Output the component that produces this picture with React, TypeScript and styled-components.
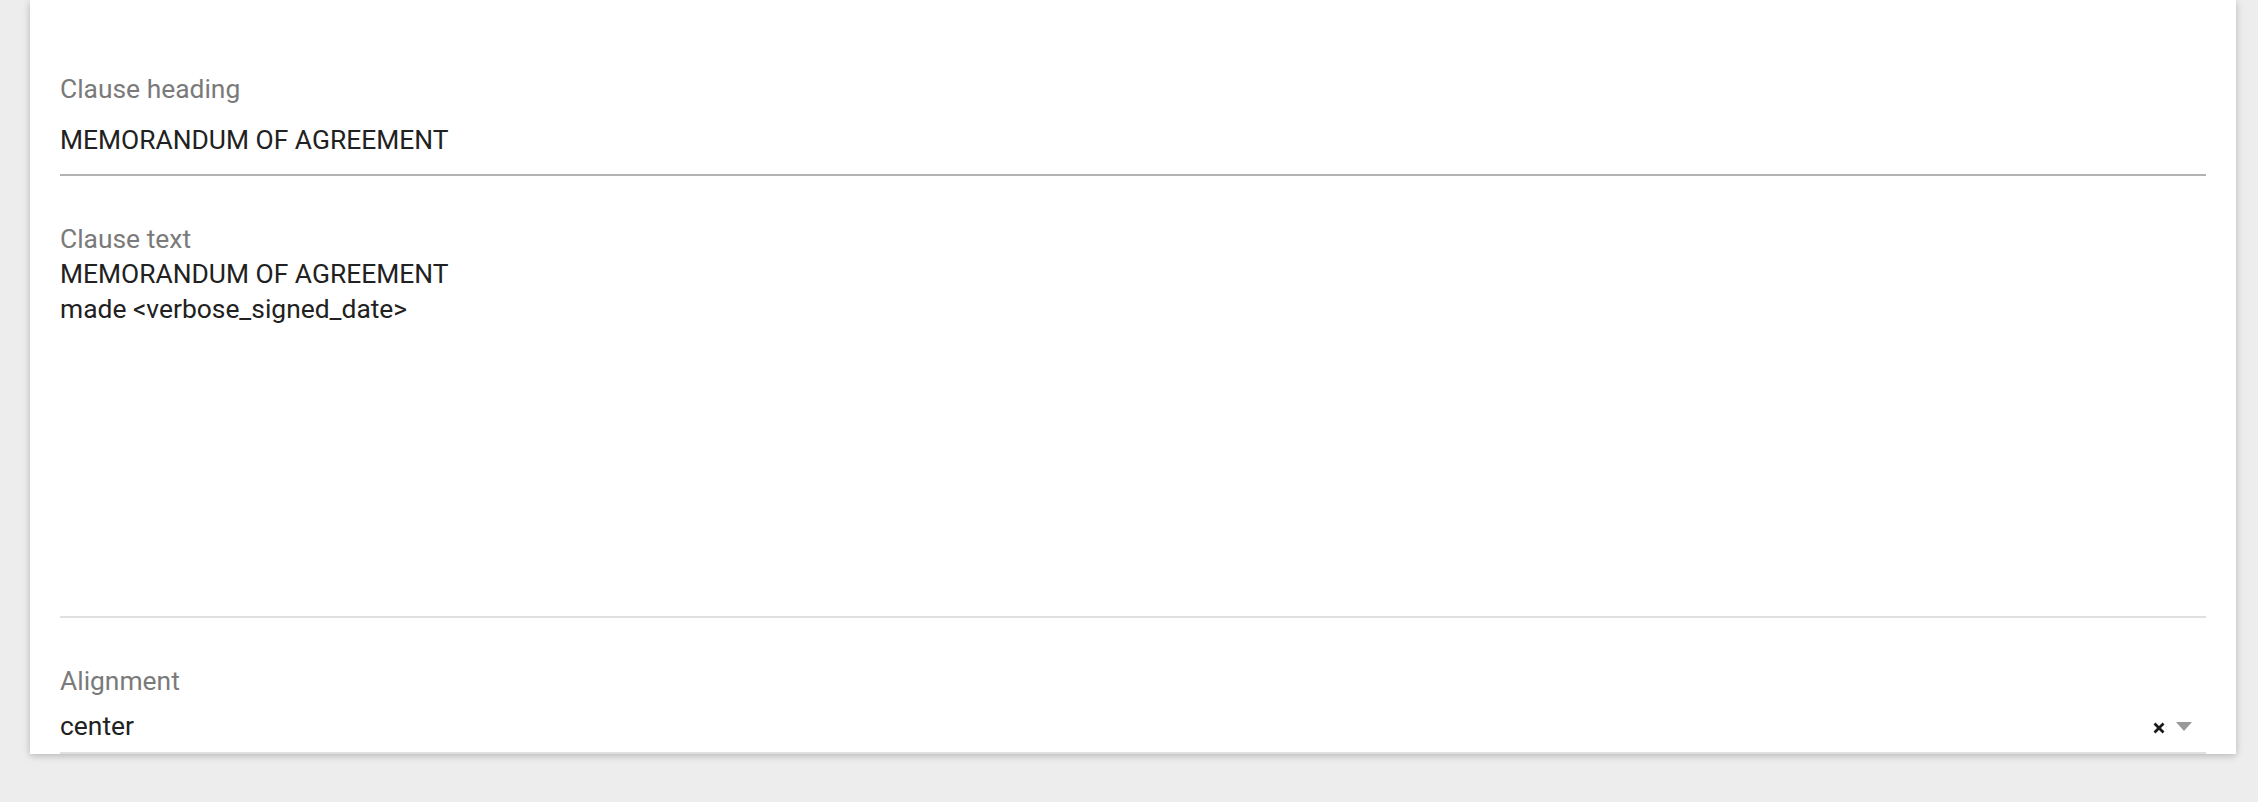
import styled, { createGlobalStyle } from "styled-components";

const GlobalStyle = createGlobalStyle`
  html, body {
    margin: 0;
    padding: 0;
    background: #ededed;
    font-family: Roboto, "Liberation Sans", Arial, sans-serif;
  }
`;

const Page = styled.div`
  min-height: 802px;
  background: #ededed;
  overflow: hidden;
`;

const Card = styled.div`
  margin: 0 22px 0 30px;
  padding: 74px 30px 0;
  background: #fff;
  box-shadow: 0 1.5px 9px rgba(0, 0, 0, 0.12), 0 1.5px 6px rgba(0, 0, 0, 0.12);
`;

const Field = styled.div<{ $gap?: number }>`
  display: flex;
  flex-direction: column;
  margin-top: ${(p) => p.$gap ?? 0}px;
`;

const Label = styled.label`
  font-size: 26.4px;
  line-height: 30px;
  color: #7a7a7a;
`;

const Value = styled.div`
  margin-top: 19px;
  padding-bottom: 16px;
  font-size: 26.4px;
  line-height: 35px;
  color: #212121;
  border-bottom: 2px solid #b3b3b3;
`;

const TextArea = styled.div`
  margin-top: 3px;
  height: 359px;
  font-size: 26.4px;
  line-height: 35px;
  color: #212121;
  border-bottom: 2px solid #e0e0e0;
`;

const SelectRow = styled.div`
  margin-top: 19px;
  height: 37px;
  display: flex;
  align-items: flex-start;
  border-bottom: 2px solid #e0e0e0;
`;

const SelectValue = styled.span`
  flex: 1;
  font-size: 26.4px;
  line-height: 22px;
  color: #212121;
`;

const Icons = styled.div`
  display: flex;
  align-items: flex-start;
  gap: 11px;
  margin: 7px 14px 0 0;
`;

const ClearIcon = () => (
  <svg width="12" height="12" viewBox="0 0 12 12">
    <path d="M1.5 1.5 L10.5 10.5 M10.5 1.5 L1.5 10.5" stroke="#1a1a1a" strokeWidth="2.8" />
  </svg>
);

const ArrowIcon = () => (
  <svg width="16" height="9" viewBox="0 0 16 9">
    <path d="M0 0 H16 L8 9 Z" fill="#999" />
  </svg>
);

export default function App() {
  return (
    <Page>
      <GlobalStyle />
      <Card>
        <Field>
          <Label>Clause heading</Label>
          <Value>MEMORANDUM OF AGREEMENT</Value>
        </Field>

        <Field $gap={48}>
          <Label>Clause text</Label>
          <TextArea>
            MEMORANDUM OF AGREEMENT
            <br />
            made &lt;verbose_signed_date&gt;
          </TextArea>
        </Field>

        <Field $gap={48}>
          <Label>Alignment</Label>
          <SelectRow>
            <SelectValue>center</SelectValue>
            <Icons>
              <ClearIcon />
              <ArrowIcon />
            </Icons>
          </SelectRow>
        </Field>
      </Card>
    </Page>
  );
}
